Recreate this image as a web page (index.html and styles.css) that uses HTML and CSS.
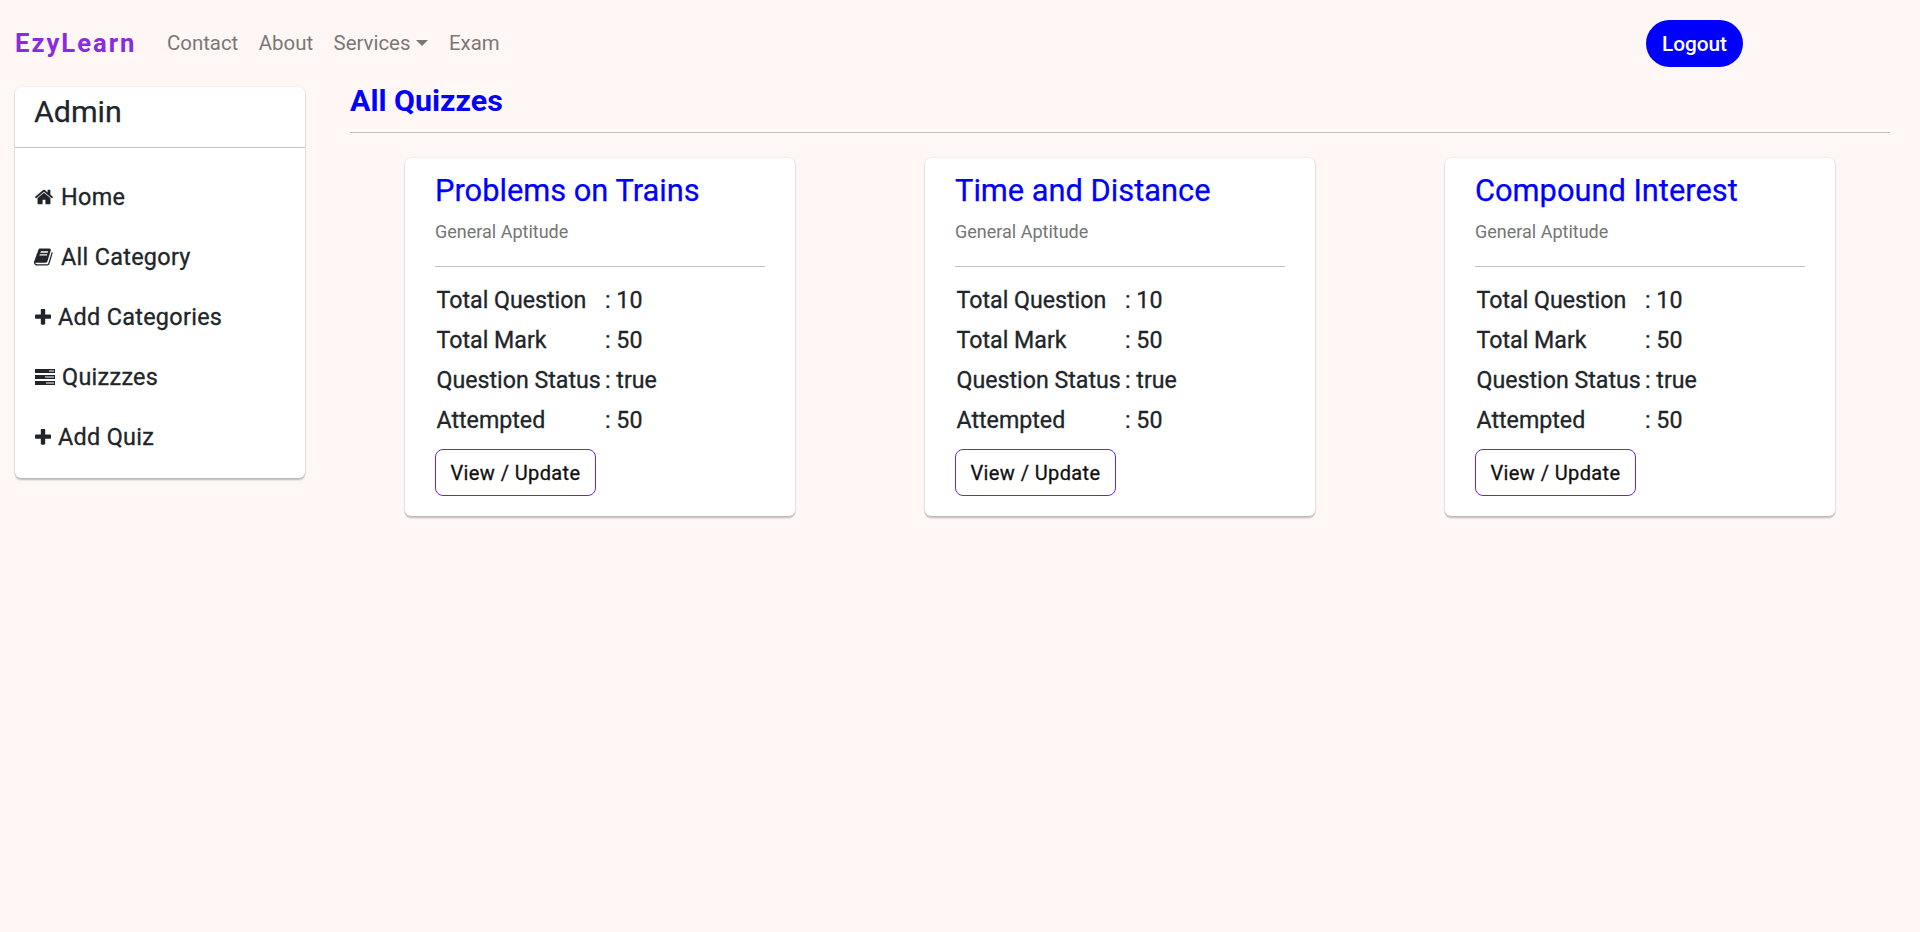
FILE: index.html
```html
<!DOCTYPE html>
<html lang="en">
<head>
<meta charset="utf-8">
<title>EzyLearn</title>
<link rel="stylesheet" href="styles.css">
</head>
<body>
<nav class="navbar">
  <a class="brand">EzyLearn</a>
  <ul class="nav-links">
    <li>Contact</li>
    <li>About</li>
    <li class="dropdown">Services<span class="caret"></span></li>
    <li>Exam</li>
  </ul>
  <a class="logout">Logout</a>
</nav>
<div class="layout">
  <aside class="sidebar">
    <h3 class="side-title">Admin</h3>
    <hr class="side-rule">
    <ul class="side-list">
      <li><svg class="ico ico-home" viewBox="0 0 1792 1792"><path d="M1472 992v480q0 26-19 45t-45 19h-384v-384h-256v384h-384q-26 0-45-19t-19-45v-480q0-1 .5-3t.5-3l575-474 575 474q1 2 1 6zm223-69l-62 74q-8 9-21 11h-3q-13 0-21-7l-692-577-692 577q-12 8-24 7-13-2-21-11l-62-74q-8-10-7-23.500t11-21.500l719-599q32-26 76-26t76 26l244 204v-195q0-14 9-23t23-9h192q14 0 23 9t9 23v408l219 182q10 8 11 21.500t-7 23.500z"/></svg>Home</li>
      <li><svg class="ico ico-home" viewBox="0 0 1792 1792"><path d="M1639 478q40 57 18 129l-275 906q-19 64-76.500 107.500t-122.500 43.500h-923q-77 0-148.500-53.500t-99.500-131.500q-24-67-2-127 0-4 3-27t4-37q1-8-3-21.500t-3-19.500q2-11 8-21t16.500-23.500 16.500-23.500q23-38 45-91.500t30-91.500q3-10 .5-30t-.5-28q3-11 17-28t17-23q21-36 42-92t25-90q1-9-2.500-32t.5-28q4-13 22-30.500t22-22.500q19-26 42.500-84.500t27.500-96.500q1-8-3-25.500t-2-26.500q2-8 9-18t18-23 17-21q8-12 16.500-30.500t15-35 16-36 19.500-32 26.500-23.500 36-11.500 47.500 5.500l-1 3q38-9 51-9h761q74 0 114 56t18 130l-274 906q-36 119-71.500 153.500t-128.500 34.500h-869q-27 0-38 15-11 16-1 43 24 70 144 70h923q29 0 56-15.500t35-41.500l300-987q7-22 5-57 38 15 59 43zm-1064 2q-4 13 2 22.500t20 9.500h608q13 0 25.500-9.500t16.500-22.500l21-64q4-13-2-22.500t-20-9.500h-608q-13 0-25.500 9.500t-16.500 22.500zm-83 256q-4 13 2 22.500t20 9.500h608q13 0 25.500-9.500t16.500-22.500l21-64q4-13-2-22.500t-20-9.500h-608q-13 0-25.500 9.500t-16.500 22.500z"/></svg>All Category</li>
      <li><svg class="ico ico-plus" viewBox="0 0 1408 1408"><path d="M1408 576v192q0 40-28 68t-68 28h-416v416q0 40-28 68t-68 28h-192q-40 0-68-28t-28-68v-416h-416q-40 0-68-28t-28-68v-192q0-40 28-68t68-28h416v-416q0-40 28-68t68-28h192q40 0 68 28t28 68v416h416q40 0 68 28t28 68z"/></svg>Add Categories</li>
      <li><svg class="ico ico-tasks" viewBox="0 0 20 16"><path fill-rule="evenodd" d="M0 0h20v4H0zM14 1.400v1.200h5V1.400zM0 6h20v4H0zM10 7.400v1.200h9V7.400zM0 12h20v4H0zM11 13.400v1.200h8v-1.200z"/></svg>Quizzzes</li>
      <li><svg class="ico ico-plus" viewBox="0 0 1408 1408"><path d="M1408 576v192q0 40-28 68t-68 28h-416v416q0 40-28 68t-68 28h-192q-40 0-68-28t-28-68v-416h-416q-40 0-68-28t-28-68v-192q0-40 28-68t68-28h416v-416q0-40 28-68t68-28h192q40 0 68 28t28 68v416h416q40 0 68 28t28 68z"/></svg>Add Quiz</li>
    </ul>
  </aside>
  <main class="content">
    <h2 class="page-title">All Quizzes</h2>
    <hr class="page-rule">
    <div class="cards">
      <article class="card">
        <h4 class="card-title">Problems on Trains</h4>
        <p class="card-sub">General Aptitude</p>
        <hr class="card-rule">
        <dl class="stats">
          <dt>Total Question</dt><dd>: 10</dd>
          <dt>Total Mark</dt><dd>: 50</dd>
          <dt>Question Status</dt><dd>: true</dd>
          <dt>Attempted</dt><dd>: 50</dd>
        </dl>
        <a class="btn-outline">View / Update</a>
      </article>
      <article class="card">
        <h4 class="card-title">Time and Distance</h4>
        <p class="card-sub">General Aptitude</p>
        <hr class="card-rule">
        <dl class="stats">
          <dt>Total Question</dt><dd>: 10</dd>
          <dt>Total Mark</dt><dd>: 50</dd>
          <dt>Question Status</dt><dd>: true</dd>
          <dt>Attempted</dt><dd>: 50</dd>
        </dl>
        <a class="btn-outline">View / Update</a>
      </article>
      <article class="card">
        <h4 class="card-title">Compound Interest</h4>
        <p class="card-sub">General Aptitude</p>
        <hr class="card-rule">
        <dl class="stats">
          <dt>Total Question</dt><dd>: 10</dd>
          <dt>Total Mark</dt><dd>: 50</dd>
          <dt>Question Status</dt><dd>: true</dd>
          <dt>Attempted</dt><dd>: 50</dd>
        </dl>
        <a class="btn-outline">View / Update</a>
      </article>
    </div>
  </main>
</div>
</body>
</html>
```
FILE: styles.css
```css
* { box-sizing: border-box; }
html, body { margin: 0; padding: 0; }
body {
  background: #fff7f5;
  font-family: Roboto, "Liberation Sans", sans-serif;
  color: #212529;
  min-height: 932px;
  overflow: hidden;
}
.navbar {
  height: 87px;
  display: flex;
  align-items: center;
  padding: 0 0 0 15px;
}
.brand {
  font-size: 25.600px;
  font-weight: 700;
  letter-spacing: 2px;
  color: #8a2be2;
  width: 152px;
  margin-top: -1px;
}
.nav-links {
  list-style: none;
  display: flex;
  gap: 20.500px;
  margin: -2px 0 0;
  padding: 0;
  font-size: 20.400px;
  color: #7d7676;
  width: 1479px;
}
.caret {
  display: inline-block;
  margin-left: 6px;
  vertical-align: 4px;
  border-top: 6px solid currentColor;
  border-left: 6px solid transparent;
  border-right: 6px solid transparent;
}
.logout {
  width: 97px;
  height: 47px;
  background: #0000ff;
  border-radius: 24px;
  color: #fff;
  font-size: 20.800px;
  font-weight: 500;
  display: flex;
  align-items: center;
  justify-content: center;
}
.layout {
  display: flex;
  padding: 0 30px 0 15px;
  gap: 45px;
  align-items: flex-start;
}
.sidebar {
  width: 290px;
  flex: none;
  height: 391px;
  background: #fff;
  border-radius: 6px;
  box-shadow: 0 2px 2px rgba(0,0,0,.25), 0 0 2px rgba(0,0,0,.12);
}
.side-title {
  margin: 0;
  padding: 6px 19px 0;
  height: 60px;
  font-size: 30.400px;
  font-weight: 400;
  line-height: 38px;
  -webkit-text-stroke: .25px currentColor;
}
.side-rule { margin: 0; border: 0; border-top: 1px solid #c2c2c2; }
.side-list {
  list-style: none;
  margin: 0;
  padding: 19px 20px 0;
  font-size: 23.400px;
  font-weight: 400;
  -webkit-text-stroke: .3px currentColor;
}
.side-list li {
  height: 60px;
  display: flex;
  align-items: center;
  letter-spacing: .3px;
}
.ico { fill: #212529; flex: none; margin-right: 7px; }
.ico-home { width: 20px; height: 20px; margin-left: -1px; margin-right: 7px; }
.ico-plus { width: 16px; height: 16px; margin-right: 7px; }
.ico-tasks { width: 20px; height: 16px; }
.content { flex: 1; min-width: 0; }
.page-title {
  margin: 0;
  font-size: 30.400px;
  font-weight: 700;
  line-height: 28px;
  height: 45px;
  color: #0000ff;
}
.page-rule { margin: 0 0 25px; border: 0; border-top: 1px solid #c2c2c2; }
.cards {
  display: flex;
  justify-content: space-between;
  padding: 0 55px;
}
.card {
  width: 390px;
  height: 358px;
  background: #fff;
  border-radius: 6px;
  box-shadow: 0 2px 2px rgba(0,0,0,.25), 0 0 2px rgba(0,0,0,.12);
  padding: 14px 30px 0;
}
.card-title {
  margin: 0;
  font-size: 30.800px;
  font-weight: 400;
  line-height: 38px;
  color: #0000ff;
  -webkit-text-stroke: .25px currentColor;
}
.card-sub {
  margin: 10px 0 0;
  font-size: 18px;
  line-height: 24px;
  color: #757575;
}
.card-rule { margin: 22px 0 0; border: 0; border-top: 1px solid #c2c2c2; }
.stats {
  display: grid;
  grid-template-columns: 168.500px auto;
  justify-content: start;
  margin: 13px 0 0 1.500px;
  font-size: 23.200px;
  font-weight: 400;
  line-height: 40px;
  -webkit-text-stroke: .3px currentColor;
}
.stats dd { margin: 0; }
.btn-outline {
  display: flex;
  align-items: center;
  justify-content: center;
  margin-top: 9px;
  width: 161px;
  height: 47px;
  border: 1px solid #7a20d4;
  border-radius: 8px;
  font-size: 20px;
  font-weight: 400;
  letter-spacing: .4px;
  color: #111;
  -webkit-text-stroke: .3px currentColor;
}
```
